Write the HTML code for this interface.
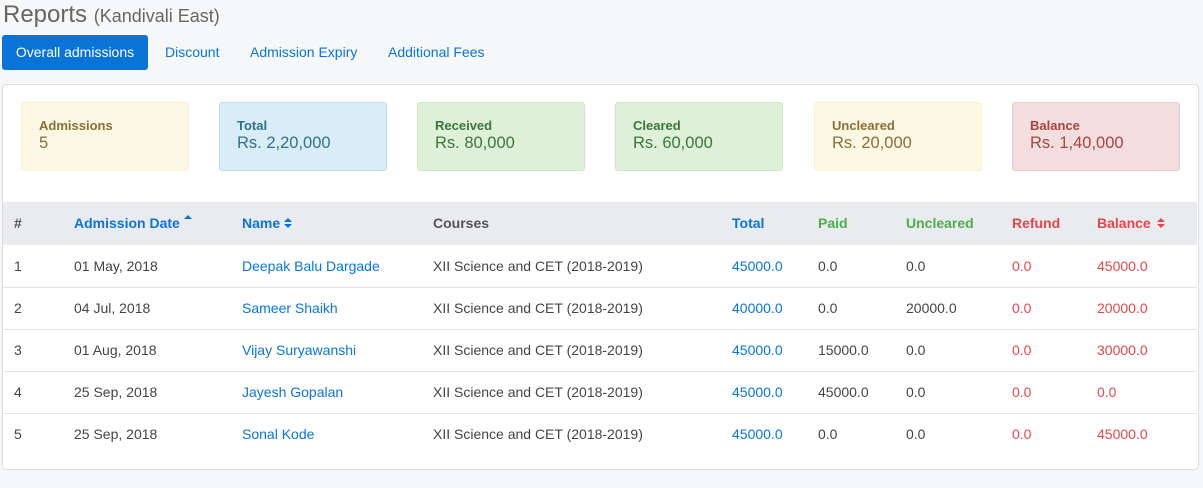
<!DOCTYPE html><html><head><style>
body{margin:0;width:1203px;height:488px;background:#f6f7f9;font-family:"Liberation Sans",sans-serif;font-size:14px;color:#444;position:relative;overflow:hidden}
.a{position:absolute;white-space:nowrap}
h1{position:absolute;left:3px;top:1px;margin:0;font-weight:normal;font-size:24px;color:#666}
h1 small{font-size:18px}
.tab{position:absolute;top:35px;height:35px;line-height:34px;font-size:14px;color:#0b74d6}
.panel{position:absolute;left:2px;top:84px;width:1195px;height:384px;background:#fff;border:1px solid #ddd;border-radius:4px}
.card{position:absolute;top:102px;width:166px;height:67px;border:1px solid;border-radius:3px;box-sizing:content-box}
.card b{position:absolute;left:17px;top:15px;font-size:13px}
.card span{position:absolute;left:17px;top:31px;font-size:16.5px}
.th{position:absolute;left:3px;top:202px;width:1194px;height:43px;background:#e9ebee}
.row{position:absolute;left:3px;width:1194px;height:42px;border-top:1px solid #e3e3e3}
.h{font-weight:bold}
.bl{color:#0b74d6}.gr{color:#4cae4c}.rd{color:#e2474a}
svg{vertical-align:middle}
</style></head><body>
<h1>Reports <small>(Kandivali East)</small></h1>
<div class="tab" style="left:2px;width:146px;background:#0a74d6;color:#fff;border-radius:3px;text-align:center">Overall admissions</div>
<div class="tab" style="left:165px">Discount</div>
<div class="tab" style="left:250px">Admission Expiry</div>
<div class="tab" style="left:388px">Additional Fees</div>
<div class="panel"></div>
<div class="card" style="left:21px;background:#fcf8e3;border-color:#faf0d0;color:#8a6d3b"><b>Admissions</b><span>5</span></div>
<div class="card" style="left:219px;background:#d9edf7;border-color:#b8dcef;color:#31708f"><b>Total</b><span>Rs. 2,20,000</span></div>
<div class="card" style="left:417px;background:#dff0d8;border-color:#cfe6c6;color:#3c763d"><b>Received</b><span>Rs. 80,000</span></div>
<div class="card" style="left:615px;background:#dff0d8;border-color:#cfe6c6;color:#3c763d"><b>Cleared</b><span>Rs. 60,000</span></div>
<div class="card" style="left:814px;background:#fcf8e3;border-color:#faf0d0;color:#8a6d3b"><b>Uncleared</b><span>Rs. 20,000</span></div>
<div class="card" style="left:1012px;background:#f2dede;border-color:#e8c8c8;color:#a94442"><b>Balance</b><span>Rs. 1,40,000</span></div>
<div class="th"></div>
<div class="a h" style="top:215px;left:14px;color:#555">#</div>
<div class="a h bl" style="top:215px;left:74px">Admission Date <svg width="8" height="12" viewBox="0 0 8 12" style="margin-top:-8px"><path d="M0 5L4 1L8 5Z" fill="#0b74d6"/></svg></div>
<div class="a h bl" style="top:215px;left:242px">Name <svg width="8" height="12" viewBox="0 0 8 12" style="margin-top:-3px"><path d="M0 5L4 1L8 5ZM0 7L4 11L8 7Z" fill="#0b74d6"/></svg></div>
<div class="a h" style="top:215px;left:433px;color:#555">Courses</div>
<div class="a h bl" style="top:215px;left:732px">Total</div>
<div class="a h gr" style="top:215px;left:818px">Paid</div>
<div class="a h gr" style="top:215px;left:906px">Uncleared</div>
<div class="a h rd" style="top:215px;left:1012px">Refund</div>
<div class="a h rd" style="top:215px;left:1097px">Balance <svg width="8" height="12" viewBox="0 0 8 12" style="margin-top:-3px;margin-left:2px"><path d="M0 5L4 1L8 5ZM0 7L4 11L8 7Z" fill="#e2474a"/></svg></div>
<div id="rows"></div>
<script>
var d=[["1","01 May, 2018","Deepak Balu Dargade","45000.0","0.0","0.0","45000.0"],["2","04 Jul, 2018","Sameer Shaikh","40000.0","0.0","20000.0","20000.0"],["3","01 Aug, 2018","Vijay Suryawanshi","45000.0","15000.0","0.0","30000.0"],["4","25 Sep, 2018","Jayesh Gopalan","45000.0","45000.0","0.0","0.0"],["5","25 Sep, 2018","Sonal Kode","45000.0","0.0","0.0","45000.0"]];
var h="";d.forEach(function(r,i){var y=245+i*42,t=y+13;
if(i>0)h+='<div class="row" style="top:'+y+'px"></div>';
h+='<div class="a" style="top:'+t+'px;left:14px">'+r[0]+'</div><div class="a" style="top:'+t+'px;left:74px">'+r[1]+'</div><div class="a bl" style="top:'+t+'px;left:242px">'+r[2]+'</div><div class="a" style="top:'+t+'px;left:433px">XII Science and CET (2018-2019)</div><div class="a bl" style="top:'+t+'px;left:732px">'+r[3]+'</div><div class="a" style="top:'+t+'px;left:818px">'+r[4]+'</div><div class="a" style="top:'+t+'px;left:906px">'+r[5]+'</div><div class="a rd" style="top:'+t+'px;left:1012px">0.0</div><div class="a rd" style="top:'+t+'px;left:1097px">'+r[6]+'</div>';});
document.getElementById("rows").innerHTML=h;
</script>
</body></html>
